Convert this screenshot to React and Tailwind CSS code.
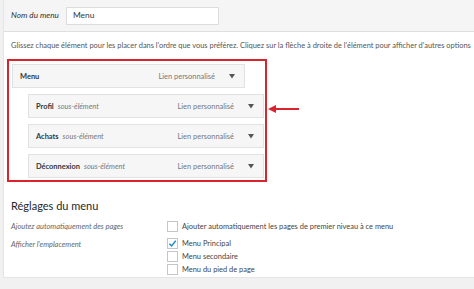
export default function App() {
  const font = { fontFamily: 'Lato, "Noto Sans", sans-serif' };
  const Tri = () => (
    <svg width="6" height="5" viewBox="0 0 6 5" className="shrink-0">
      <path d="M0 0 L6 0 L3 4.5 Z" fill="#555" />
    </svg>
  );
  const Item = ({ title, sub, className }) => (
    <div className={`flex h-[24px] items-center border border-[#e2e2e2] bg-[#f6f6f6] pl-[7px] pr-[9px] ${className}`}>
      <span className="font-bold text-[#32373c]">{title}</span>
      {sub && <span className="ml-[4px] italic text-[#777]">{sub}</span>}
      <span className="ml-auto text-[#777]">Lien personnalisé</span>
      <span className="ml-[14px] flex"><Tri /></span>
    </div>
  );
  const Box = ({ checked }) => (
    <span className="flex h-[11px] w-[11px] shrink-0 items-center justify-center border border-[#c3c7cb] bg-white">
      {checked && (
        <svg width="9" height="9" viewBox="0 0 10 10">
          <path d="M1.5 5.2 L4 7.6 L8.6 2" fill="none" stroke="#1e8cbe" strokeWidth="1.6" />
        </svg>
      )}
    </span>
  );
  return (
    <div className="h-[289px] w-[474px] overflow-hidden bg-[#f1f1f1] text-[7.45px] text-[#444]" style={font}>
      <div className="ml-[3px] flex h-[278px] flex-col border-b border-l border-[#e5e5e5] bg-white">
        <div className="flex h-[32px] shrink-0 items-center border-b border-[#dfdfdf] bg-[#f5f5f5] pl-[7px]">
          <span className="text-[8.2px] italic text-[#333]">Nom du menu</span>
          <div className="ml-[7px] flex h-[18px] w-[153px] items-center border border-[#ddd] bg-white pl-[6px] text-[8.4px] text-[#32373c]">Menu</div>
        </div>
        <div className="pl-[7px] pt-[8px] whitespace-nowrap text-[#555]">Glissez chaque élément pour les placer dans l'ordre que vous préférez. Cliquez sur la flèche à droite de l'élément pour afficher d'autres options</div>
        <div className="flex items-start">
          <div className="ml-[3px] mt-[8px] flex w-[260px] flex-col border-2 border-[#d9232d] pb-[2px] pl-[3px] pr-[1px] pt-[3px]">
            <Item title="Menu" className="w-[233px]" />
            <Item title="Profil" sub="sous-élément" className="ml-[16px] mt-[6px]" />
            <Item title="Achats" sub="sous-élément" className="ml-[16px] mt-[6px]" />
            <Item title="Déconnexion" sub="sous-élément" className="ml-[16px] mt-[6px]" />
          </div>
          <svg width="34" height="10" viewBox="0 0 34 10" className="mt-[53px]">
            <path d="M8 5 L32 5" stroke="#d9232d" strokeWidth="2" />
            <path d="M1 5 L9 1 L9 9 Z" fill="#d9232d" />
          </svg>
        </div>
        <div className="mt-[16px] pl-[7px] text-[11px] text-[#23282d]">Réglages du menu</div>
        <div className="mt-[6px] flex items-center pl-[7px]">
          <span className="w-[156px] italic text-[#666]">Ajoutez automatiquement des pages</span>
          <Box />
          <span className="ml-[4px]">Ajouter automatiquement les pages de premier niveau à ce menu</span>
        </div>
        <div className="mt-[6px] flex items-start pl-[7px]">
          <span className="mt-[1px] w-[156px] italic text-[#666]">Afficher l'emplacement</span>
          <div className="flex flex-col gap-[2px]">
            <div className="flex items-center"><Box checked /><span className="ml-[4px]">Menu Principal</span></div>
            <div className="flex items-center"><Box /><span className="ml-[4px]">Menu secondaire</span></div>
            <div className="flex items-center"><Box /><span className="ml-[4px]">Menu du pied de page</span></div>
          </div>
        </div>
      </div>
    </div>
  );
}
